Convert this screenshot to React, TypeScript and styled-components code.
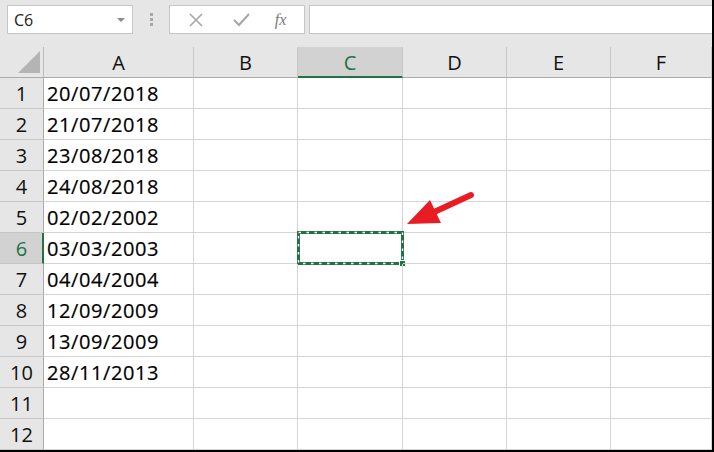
import React from "react";
import styled, { createGlobalStyle } from "styled-components";

const Global = createGlobalStyle`
  html, body { margin: 0; padding: 0; background: #fff; }
  body { font-family: "Open Sans", "Noto Sans", sans-serif; }
`;

const GREEN = "#217346";
const GRID = "#d4d4d4";
const COLS = ["A", "B", "C", "D", "E", "F"];
const COL_TRACK = "44px 150px 104px 105px 104px 104px 1fr";
const DATES = [
  "20/07/2018",
  "21/07/2018",
  "23/08/2018",
  "24/08/2018",
  "02/02/2002",
  "03/03/2003",
  "04/04/2004",
  "12/09/2009",
  "13/09/2009",
  "28/11/2013",
  "",
  "",
];

const Frame = styled.div`
  position: relative;
  width: 714px;
  height: 452px;
  box-sizing: border-box;
  border-right: 2px solid #000;
  border-bottom: 2px solid #000;
  background: #e6e6e6;
  overflow: hidden;
`;

const Toolbar = styled.div`
  display: flex;
  align-items: center;
  height: 29px;
  padding: 5px 0 13px 7px;
`;

const NameBox = styled.div`
  box-sizing: border-box;
  width: 126px;
  height: 29px;
  background: #fff;
  border: 1px solid #c6c6c6;
  display: flex;
  align-items: center;
  justify-content: space-between;
  padding: 0 7px 0 6px;
  font-size: 16px;
  color: #1a1a1a;
`;

const Caret = styled.span`
  width: 0;
  height: 0;
  border-left: 4px solid transparent;
  border-right: 4px solid transparent;
  border-top: 4px solid #8a8a8a;
`;

const Grip = styled.div`
  display: flex;
  flex-direction: column;
  gap: 2px;
  margin: 0 16px 0 17px;
  span {
    width: 3px;
    height: 3px;
    background: #a8a8a8;
  }
`;

const FxBox = styled.div`
  box-sizing: border-box;
  width: 136px;
  height: 29px;
  background: #fff;
  border: 1px solid #c6c6c6;
  display: grid;
  grid-template-columns: 47px 44px 1fr;
  align-items: center;
  justify-items: center;
  padding-left: 2px;
`;

const FxText = styled.span`
  font-family: "Liberation Serif", "DejaVu Serif", serif;
  font-style: italic;
  font-size: 16px;
  color: #7a7a7a;
  margin-right: 6px;
`;

const FormulaInput = styled.div`
  box-sizing: border-box;
  flex: 1;
  height: 29px;
  margin-left: 4px;
  background: #fff;
  border: 1px solid #c6c6c6;
  border-right: none;
`;

const Sheet = styled.div`
  display: grid;
  grid-template-columns: ${COL_TRACK};
  grid-auto-rows: 31px;
  grid-template-rows: 31px;
  background: #fff;
`;

const Corner = styled.div`
  position: relative;
  background: #e6e6e6;
  border-right: 1px solid #bcbcbc;
  border-bottom: 1px solid #ababab;
  box-sizing: border-box;
  &::after {
    content: "";
    position: absolute;
    right: 3px;
    bottom: 4px;
    width: 0;
    height: 0;
    border-left: 22px solid transparent;
    border-bottom: 22px solid #b4b4b4;
  }
`;

const ColHead = styled.div<{ $active?: boolean }>`
  box-sizing: border-box;
  display: flex;
  align-items: center;
  justify-content: center;
  font-size: 20px;
  color: ${(p) => (p.$active ? GREEN : "#111")};
  background: ${(p) => (p.$active ? "#d2d2d2" : "#e6e6e6")};
  border-right: 1px solid #c8c8c8;
  border-bottom: ${(p) => (p.$active ? `2px solid ${GREEN}` : "1px solid #ababab")};
  padding-top: ${(p) => (p.$active ? "1px" : "0")};
`;

const RowHead = styled.div<{ $active?: boolean }>`
  box-sizing: border-box;
  display: flex;
  align-items: center;
  justify-content: center;
  font-size: 20px;
  color: ${(p) => (p.$active ? GREEN : "#111")};
  background: ${(p) => (p.$active ? "#d2d2d2" : "#e6e6e6")};
  border-right: ${(p) => (p.$active ? `2px solid ${GREEN}` : "1px solid #ababab")};
  border-bottom: 1px solid #c8c8c8;
  padding-left: ${(p) => (p.$active ? "1px" : "0")};
`;

const Cell = styled.div`
  position: relative;
  box-sizing: border-box;
  display: flex;
  align-items: center;
  padding-left: 3px;
  font-size: 20px;
  letter-spacing: 0.6px;
  color: #000;
  -webkit-text-stroke: 0.2px #000;
  border-right: 1px solid ${GRID};
  border-bottom: 1px solid ${GRID};
  white-space: nowrap;
`;

const Marquee = styled.svg`
  position: absolute;
  left: -1px;
  top: -2px;
  width: 107px;
  height: 34px;
  overflow: visible;
`;

const Handle = styled.span`
  position: absolute;
  right: -4px;
  bottom: -4px;
  width: 5px;
  height: 5px;
  background: ${GREEN};
  border: 1px solid #fff;
`;

const Arrow = styled.svg`
  position: absolute;
  left: 0;
  top: 0;
  width: 714px;
  height: 452px;
  pointer-events: none;
`;

export default function App() {
  return (
    <>
      <Global />
      <Frame>
        <Toolbar>
          <NameBox>
            <span>C6</span>
            <Caret />
          </NameBox>
          <Grip>
            <span />
            <span />
            <span />
          </Grip>
          <FxBox>
            <svg width="14" height="14" viewBox="0 0 14 14">
              <path d="M1 1 L13 13 M13 1 L1 13" stroke="#a6a6a6" strokeWidth="1.6" fill="none" />
            </svg>
            <svg width="17" height="14" viewBox="0 0 17 14">
              <path d="M1 7 L6 12 L16 1" stroke="#a6a6a6" strokeWidth="2" fill="none" />
            </svg>
            <FxText>fx</FxText>
          </FxBox>
          <FormulaInput />
        </Toolbar>
        <Sheet>
          <Corner />
          {COLS.map((c) => (
            <ColHead key={c} $active={c === "C"}>
              {c}
            </ColHead>
          ))}
          {DATES.map((d, i) => (
            <React.Fragment key={i}>
              <RowHead $active={i === 5}>{i + 1}</RowHead>
              <Cell>{d}</Cell>
              {COLS.slice(1).map((c) => (
                <Cell key={c}>
                  {i === 5 && c === "C" && (
                    <>
                      <Marquee viewBox="0 0 107 34">
                        <rect x="1.5" y="1.5" width="104" height="31" fill="none" stroke={GREEN} strokeWidth="3" />
                        <rect
                          x="1.5"
                          y="1.5"
                          width="104"
                          height="31"
                          fill="none"
                          stroke="#fff"
                          strokeWidth="1.4"
                          strokeDasharray="2.5 5.5"
                        />
                      </Marquee>
                      <Handle />
                    </>
                  )}
                </Cell>
              ))}
            </React.Fragment>
          ))}
        </Sheet>
        <Arrow viewBox="0 0 714 452">
          <line x1="471" y1="195" x2="432" y2="213" stroke="#e81c24" strokeWidth="6" strokeLinecap="round" />
          <polygon points="407,224 430,200 441,223" fill="#e81c24" />
        </Arrow>
      </Frame>
    </>
  );
}
